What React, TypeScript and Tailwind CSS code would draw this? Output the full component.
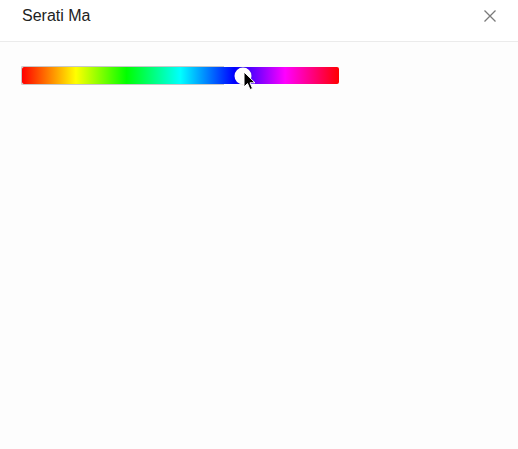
import React from "react";

export default function App() {
  const hue = 69.7; // percent position of thumb
  return (
    <div className="w-[518px] h-[449px] bg-[#fdfdfd] font-['Liberation_Sans',Arial,sans-serif]">
      <div className="h-[42px] bg-white border-b border-[#ebebeb] flex items-start justify-between pl-[22px] pr-[21px] pt-[7px]">
        <span className="text-[16px] text-[#222] leading-[18px]">Serati Ma</span>
        <button className="w-[14px] h-[14px] flex items-center justify-center mt-[2px]">
          <svg width="12" height="12" viewBox="0 0 12 12">
            <path d="M0.5 0.5 L11.5 11.5 M11.5 0.5 L0.5 11.5" stroke="#7a7a7a" strokeWidth="1.3" />
          </svg>
        </button>
      </div>
      <div className="pt-[25px] pl-[22px]">
        <div className="relative w-[317px] h-[17px] rounded-[2px] bg-[linear-gradient(to_right,#ff0000_0%,#ffff00_17%,#00ff00_33%,#00ffff_50%,#0000ff_67%,#ff00ff_83%,#ff0000_100%)]">
          <div className="absolute -left-[1px] -top-[1px] w-[203px] h-[19px] border border-r-0 border-[#c8c8c8] rounded-l-[2px]" />
          <div
            className="absolute top-1/2 w-[17px] h-[17px] -translate-x-1/2 -translate-y-1/2 rounded-full bg-white shadow-[0_0_1px_rgba(0,0,0,0.3)]"
            style={{ left: `${hue}%` }}
          />
          <svg className="absolute left-[221px] top-[4px]" width="13" height="20" viewBox="0 0 13 20">
            <path d="M1 1 L1 16 L4.5 12.5 L7 18.5 L9.5 17.5 L7 11.8 L12 11.8 Z" fill="#000" stroke="#fff" strokeWidth="1" strokeLinejoin="round" />
          </svg>
        </div>
      </div>
    </div>
  );
}
